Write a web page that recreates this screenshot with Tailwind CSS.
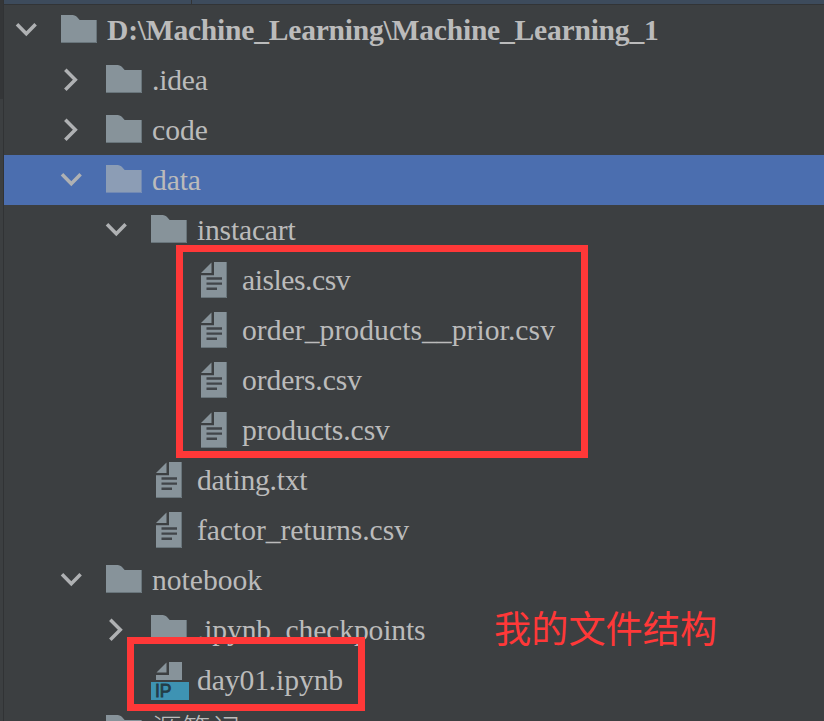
<!DOCTYPE html>
<html lang="zh">
<head>
<meta charset="utf-8">
<title>Project tree</title>
<script src="https://cdn.jsdelivr.net/npm/@tailwindcss/browser@4"></script>
</head>
<body class="bg-[#3c3f41]">
<svg class="hidden">
  <symbol id="down" viewBox="0 0 53 50"><path d="M9 19.300l9.300 9.500 9.300-9.500" fill="none" stroke="#afb1b3" stroke-width="3.500"/></symbol>
  <symbol id="right" viewBox="0 0 53 50"><path d="M12.300 14.800l10 10-10 10" fill="none" stroke="#afb1b3" stroke-width="3.500"/></symbol>
  <symbol id="folder" viewBox="0 0 46 50"><path d="M0 10h11.500c2 0 3.500 1 4.500 2l2.700 3H36v23H0z" fill="#87939a"/><path d="M0 37.500h35.500V15" fill="none" stroke="#69757b"/></symbol>
  <symbol id="folder-selected" viewBox="0 0 46 50"><path d="M0 10h11.500c2 0 3.500 1 4.500 2l2.700 3H36v23H0z" fill="#8c9db5"/><path d="M0 37.500h35.500V15" fill="none" stroke="#7189b4"/></symbol>
  <symbol id="doc" viewBox="0 0 46 50"><path d="M5 18L15.500 7.500V18z" fill="#87939a"/><path d="M18 7h13v36H5V20.300h13z" fill="#87939a"/><path d="M5 42.500h25.500V7" fill="none" stroke="#69757b"/><path d="M10.500 23.500H26M10.500 28.600H26M10.500 33.700H21" stroke="#414549" stroke-width="2.400"/></symbol>
  <symbol id="ipynb" viewBox="0 0 46 50"><path d="M5.500 17.500L15.500 7.500v10z" fill="#87939a"/><path d="M18 7h13v18H5v-5h13z" fill="#87939a"/><path d="M0 27h38v18H0z" fill="#3e93b3"/><text x="4" y="42.300" font-family="Liberation Sans" font-size="17.500" fill="#233d48" stroke="#233d48" stroke-width=".8">IP</text></symbol>
</svg>
<main class="relative w-[824px] h-[721px] overflow-hidden bg-[#3c3f41] flex font-['Liberation_Serif','Noto_Sans_CJK_SC',serif] text-[29.6px] text-[#bbbbbb]">
  <div class="w-[3px] shrink-0"><div class="h-[99px] bg-[#343638]"></div></div>
  <div class="w-px shrink-0 bg-[#313335]"></div>
  <div class="flex-1 min-w-0">
    <div class="h-[5px] bg-[#3d4b5c] border-b border-[#323436] flex"><div class="w-[188px] border-r border-[#323436]"></div></div>
    <ul class="leading-[50px] whitespace-nowrap">
      <li class="h-[50px] flex pl-[4px] font-bold tracking-[-0.24px]"><svg class="w-[53px] h-[50px] shrink-0"><use href="#down"/></svg><svg class="w-[46px] h-[50px] shrink-0"><use href="#folder"/></svg><span>D:\Machine_Learning\Machine_Learning_1</span></li>
      <li class="h-[50px] flex pl-[49px] tracking-[-0.2px]"><svg class="w-[53px] h-[50px] shrink-0"><use href="#right"/></svg><svg class="w-[46px] h-[50px] shrink-0"><use href="#folder"/></svg><span>.idea</span></li>
      <li class="h-[50px] flex pl-[49px]"><svg class="w-[53px] h-[50px] shrink-0"><use href="#right"/></svg><svg class="w-[46px] h-[50px] shrink-0"><use href="#folder"/></svg><span>code</span></li>
      <li class="h-[50px] flex pl-[49px] bg-[#4b6eaf] tracking-[-0.1px]"><svg class="w-[53px] h-[50px] shrink-0"><use href="#down"/></svg><svg class="w-[46px] h-[50px] shrink-0"><use href="#folder-selected"/></svg><span>data</span></li>
      <li class="h-[50px] flex pl-[94px] tracking-[-0.2px]"><svg class="w-[53px] h-[50px] shrink-0"><use href="#down"/></svg><svg class="w-[46px] h-[50px] shrink-0"><use href="#folder"/></svg><span>instacart</span></li>
      <li class="h-[50px] flex pl-[192px] tracking-[-0.45px]"><svg class="w-[46px] h-[50px] shrink-0"><use href="#doc"/></svg><span>aisles.csv</span></li>
      <li class="h-[50px] flex pl-[192px] tracking-[0.06px]"><svg class="w-[46px] h-[50px] shrink-0"><use href="#doc"/></svg><span>order_products__prior.csv</span></li>
      <li class="h-[50px] flex pl-[192px] tracking-[-0.1px]"><svg class="w-[46px] h-[50px] shrink-0"><use href="#doc"/></svg><span>orders.csv</span></li>
      <li class="h-[50px] flex pl-[192px] tracking-[-0.08px]"><svg class="w-[46px] h-[50px] shrink-0"><use href="#doc"/></svg><span>products.csv</span></li>
      <li class="h-[50px] flex pl-[147px] tracking-[-0.24px]"><svg class="w-[46px] h-[50px] shrink-0"><use href="#doc"/></svg><span>dating.txt</span></li>
      <li class="h-[50px] flex pl-[147px] tracking-[-0.05px]"><svg class="w-[46px] h-[50px] shrink-0"><use href="#doc"/></svg><span>factor_returns.csv</span></li>
      <li class="h-[50px] flex pl-[49px]"><svg class="w-[53px] h-[50px] shrink-0"><use href="#down"/></svg><svg class="w-[46px] h-[50px] shrink-0"><use href="#folder"/></svg><span>notebook</span></li>
      <li class="h-[50px] flex pl-[94px] tracking-[-0.14px]"><svg class="w-[53px] h-[50px] shrink-0"><use href="#right"/></svg><svg class="w-[46px] h-[50px] shrink-0"><use href="#folder"/></svg><span>.ipynb_checkpoints</span></li>
      <li class="h-[50px] flex pl-[147px] tracking-[-0.1px]"><svg class="w-[46px] h-[50px] shrink-0"><use href="#ipynb"/></svg><span>day01.ipynb</span></li>
      <li class="h-[50px] flex pl-[102px]"><svg class="w-[46px] h-[50px] shrink-0"><use href="#folder"/></svg><span class="font-light">源笔记</span></li>
    </ul>
  </div>
  <div class="absolute left-[176px] top-[245px] w-[412px] h-[213px] border-7 border-[#ff3838]"></div>
  <div class="absolute left-[127px] top-[637px] w-[238px] h-[74px] border-7 border-[#ff3838]"></div>
  <div class="absolute left-[494px] top-[602px] leading-[50px] text-[37.2px] text-[#ff3838] font-['Noto_Sans_CJK_SC',sans-serif] whitespace-nowrap">我的文件结构</div>
</main>
</body>
</html>
